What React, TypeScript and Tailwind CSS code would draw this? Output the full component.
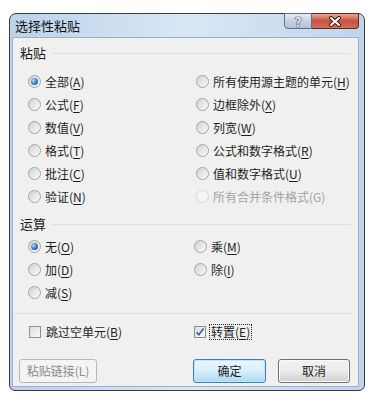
import React from 'react'

const font = "font-['Noto_Sans_CJK_SC','Noto_Sans',sans-serif]"

type Opt = { label: string; key: string; checked?: boolean; disabled?: boolean }

// splits "全部(A)" so the access key letter gets an underline
const Label: React.FC<{ text: string; k: string; disabled?: boolean }> = ({ text, k, disabled }) => {
  const i = text.lastIndexOf('(' + k + ')')
  if (i < 0) return <span>{text}</span>
  return (
    <span className={disabled ? 'text-[#a3a3a3]' : 'text-[#1e1e1e]'}>
      {text.slice(0, i)}(
      {disabled ? <span>{k}</span> : <span className="underline underline-offset-[2px]">{k}</span>})
    </span>
  )
}

const Radio: React.FC<{ checked?: boolean; disabled?: boolean }> = ({ checked, disabled }) => (
  <div
    className={`w-[13px] h-[13px] rounded-full border flex items-center justify-center shrink-0 ${
      disabled
        ? 'border-[#d6d6d6] bg-[#f4f4f4]'
        : 'border-[#a4a4a4] bg-gradient-to-br from-[#d2d2d2] to-[#fbfbfb]'
    }`}
  >
    {checked && (
      <div className="w-[7px] h-[7px] rounded-full bg-[radial-gradient(circle_at_35%_35%,#a9dcf8,#2a6fb5_60%,#1b4d86)]" />
    )}
  </div>
)

const Check: React.FC<{ checked?: boolean }> = ({ checked }) => (
  <div className="w-[12px] h-[12px] border border-[#8f8f8f] bg-gradient-to-br from-[#dcdcdc] to-[#fafafa] flex items-center justify-center shrink-0">
    {checked && (
      <svg width="10" height="10" viewBox="0 0 10 10">
        <path d="M1.5 5.2 L3.8 7.8 L8.6 1.6" fill="none" stroke="#3d5c93" strokeWidth="1.6" />
      </svg>
    )}
  </div>
)

const Option: React.FC<{ o: Opt }> = ({ o }) => (
  <div className="h-[23px] flex items-center gap-[4px]">
    <Radio checked={o.checked} disabled={o.disabled} />
    <Label text={o.label} k={o.key} disabled={o.disabled} />
  </div>
)

const GroupLabel: React.FC<{ text: string }> = ({ text }) => (
  <div className="h-[16px] flex items-center gap-[6px] pl-[7px] pr-[7px]">
    <span className="text-[13px] text-[#1e1e1e]">{text}</span>
    <div className="flex-1 border-t border-[#dbe0e4] mt-[3px]" />
  </div>
)

const PasteSpecial: React.FC = () => {
  const pasteLeft: Opt[] = [
    { label: '全部(A)', key: 'A', checked: true },
    { label: '公式(F)', key: 'F' },
    { label: '数值(V)', key: 'V' },
    { label: '格式(T)', key: 'T' },
    { label: '批注(C)', key: 'C' },
    { label: '验证(N)', key: 'N' },
  ]
  const pasteRight: Opt[] = [
    { label: '所有使用源主题的单元(H)', key: 'H' },
    { label: '边框除外(X)', key: 'X' },
    { label: '列宽(W)', key: 'W' },
    { label: '公式和数字格式(R)', key: 'R' },
    { label: '值和数字格式(U)', key: 'U' },
    { label: '所有合并条件格式(G)', key: 'G', disabled: true },
  ]
  const opLeft: Opt[] = [
    { label: '无(O)', key: 'O', checked: true },
    { label: '加(D)', key: 'D' },
    { label: '减(S)', key: 'S' },
  ]
  const opRight: Opt[] = [
    { label: '乘(M)', key: 'M' },
    { label: '除(I)', key: 'I' },
  ]

  return (
    <div className={`w-[375px] h-[406px] bg-white pt-[13px] pl-[9px] ${font} text-[12px] leading-none`}>
      {/* Window frame */}
      <div className="w-[356px] h-[378px] border border-[#3a3a3a] rounded-t-[7px] rounded-b-[6px] bg-gradient-to-r from-[#bcd2ea] via-[#d9e7f5] to-[#c0d5ec] flex flex-col pl-[2px] pr-[5px] pb-[3px]">
        {/* Title bar */}
        <div className="h-[23px] flex items-start justify-between">
          <span className="pl-[3px] pt-[5px] text-[13px] text-[#151515]">选择性粘贴</span>
          <div className="flex -mt-px">
            <div className="w-[28px] h-[16px] border border-[#5f6f84] rounded-bl-[4px] bg-gradient-to-b from-[#e6edf5] via-[#c4d1e0] to-[#b3c4d8] flex items-center justify-center">
              <span className="text-[13px] font-bold text-[#eef2f6] [text-shadow:0_0_1px_#2b3a4e,0_0_1px_#2b3a4e,0_0_1px_#2b3a4e]">?</span>
            </div>
            <div className="w-[47px] h-[16px] border border-l-0 border-[#5a2a24] rounded-br-[4px] bg-gradient-to-b from-[#e8a799] via-[#c8503d] to-[#d0705c] flex items-center justify-center">
              <svg width="14" height="11" viewBox="0 0 14 11">
                <path d="M3 2 L11 9 M11 2 L3 9" stroke="#3b1a16" strokeWidth="4" strokeLinecap="round" />
                <path d="M3 2 L11 9 M11 2 L3 9" stroke="#ffffff" strokeWidth="2" strokeLinecap="round" />
              </svg>
            </div>
          </div>
        </div>

        {/* Client area */}
        <div className="flex-1 bg-[#f0f0f0] border border-[#9fb0c4] flex flex-col pt-[6px]">
          <GroupLabel text="粘贴" />
          <div className="mt-[10px] pl-[15px] grid grid-cols-[168px_1fr]">
            <div className="flex flex-col">
              {pasteLeft.map((o) => (
                <Option key={o.key} o={o} />
              ))}
            </div>
            <div className="flex flex-col">
              {pasteRight.map((o) => (
                <Option key={o.key} o={o} />
              ))}
            </div>
          </div>

          <div className="mt-[7px]">
            <GroupLabel text="运算" />
          </div>
          <div className="mt-[4px] pl-[15px] grid grid-cols-[166px_1fr]">
            <div className="flex flex-col">
              {opLeft.map((o) => (
                <Option key={o.key} o={o} />
              ))}
            </div>
            <div className="flex flex-col">
              {opRight.map((o) => (
                <Option key={o.key} o={o} />
              ))}
            </div>
          </div>

          <div className="mt-[9px] ml-px mr-[6px] border-t border-[#dbe0e4]" />

          {/* Checkboxes */}
          <div className="mt-[9px] h-[18px] pl-[16px] grid grid-cols-[165px_1fr] items-center">
            <div className="flex items-center gap-[5px]">
              <Check />
              <Label text="跳过空单元(B)" k="B" />
            </div>
            <div className="flex items-center gap-[3px]">
              <Check checked />
              <div className="border border-dotted border-[#222] px-[1px] h-[16px] flex items-center">
                <Label text="转置(E)" k="E" />
              </div>
            </div>
          </div>

          {/* Buttons */}
          <div className="mt-[18px] flex items-center pl-[6px] pr-[8px]">
            <button className="w-[78px] h-[24px] rounded-[3px] border border-[#b4b8bc] bg-[#f4f4f4] text-[#8a8a8a] text-[12px]">
              粘贴链接(L)
            </button>
            <div className="ml-auto flex gap-[12px]">
              <button className="w-[73px] h-[24px] rounded-[3px] border border-[#3c7fb1] bg-gradient-to-b from-[#eaf6fd] via-[#d9f0fc] to-[#a7d9f5] text-[#1e1e1e] text-[12px] shadow-[inset_0_0_0_1px_#c1e6f9]">
                确定
              </button>
              <button className="w-[72px] h-[24px] rounded-[3px] border border-[#707070] bg-gradient-to-b from-[#f2f2f2] via-[#ebebeb] to-[#cfcfcf] text-[#1e1e1e] text-[12px] shadow-[inset_0_0_0_1px_#fbfbfb]">
                取消
              </button>
            </div>
          </div>
        </div>
      </div>
    </div>
  )
}

export default PasteSpecial
